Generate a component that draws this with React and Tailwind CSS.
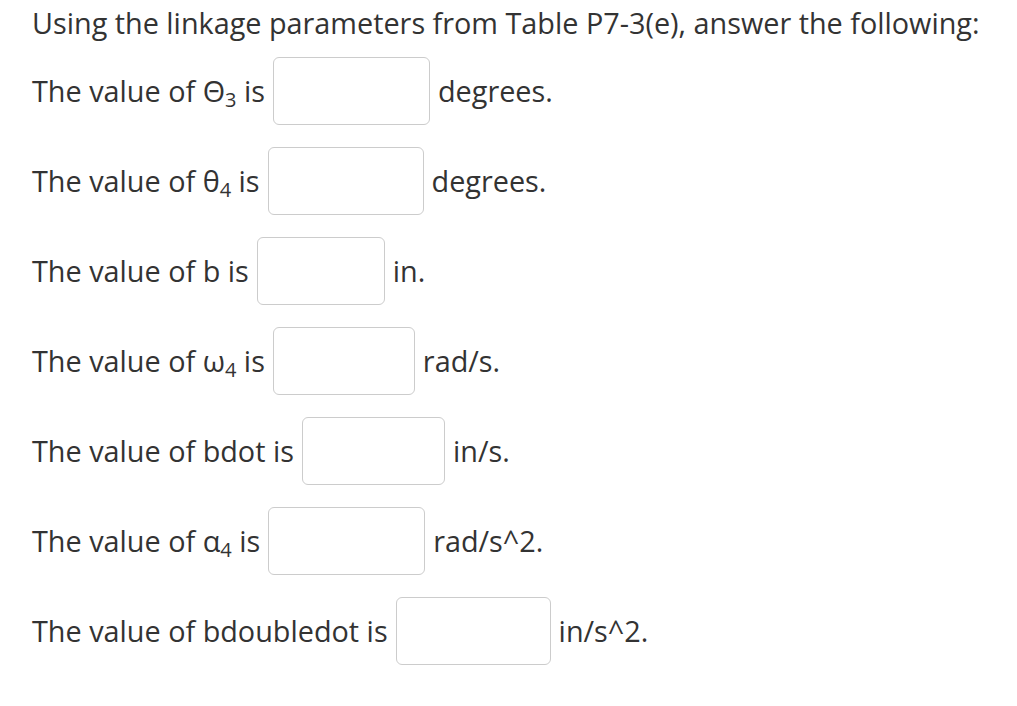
const rows = [
  { label: "The value of ", sym: "Θ", sub: "3", width: 157, unit: "degrees." },
  { label: "The value of ", sym: "θ", sub: "4", width: 156, unit: "degrees." },
  { label: "The value of b", width: 128, unit: "in." },
  { label: "The value of ", sym: "ω", sub: "4", width: 142, unit: "rad/s." },
  { label: "The value of bdot", width: 143, unit: "in/s." },
  { label: "The value of ", sym: "α", sub: "4", width: 157, unit: "rad/s^2." },
  { label: "The value of bdoubledot", width: 155, unit: "in/s^2." },
];

export default function App() {
  return (
    <div className="min-h-screen bg-white px-[32px] text-[28.8px] text-[#333333] font-['Open_Sans',sans-serif]">
      <p className="h-[45px] leading-[45px]">
        Using the linkage parameters from Table P7-3(e), answer the following:
      </p>
      <div className="mt-[12px] flex flex-col gap-[22px]">
        {rows.map((row, i) => (
          <div className="flex items-center" key={i}>
            <span>
              {row.label}
              {row.sym ? (
                <>
                  {row.sym}
                  <sub className="text-[20px]">{row.sub}</sub>
                </>
              ) : null}{" "}
              is
            </span>
            <input
              className="ml-[8px] mr-[8px] h-[68px] shrink-0 rounded-[6px] border border-[#cccccc] bg-white px-2 outline-none"
              style={{ width: row.width }}
              type="text"
            />
            <span>{row.unit}</span>
          </div>
        ))}
      </div>
    </div>
  );
}
